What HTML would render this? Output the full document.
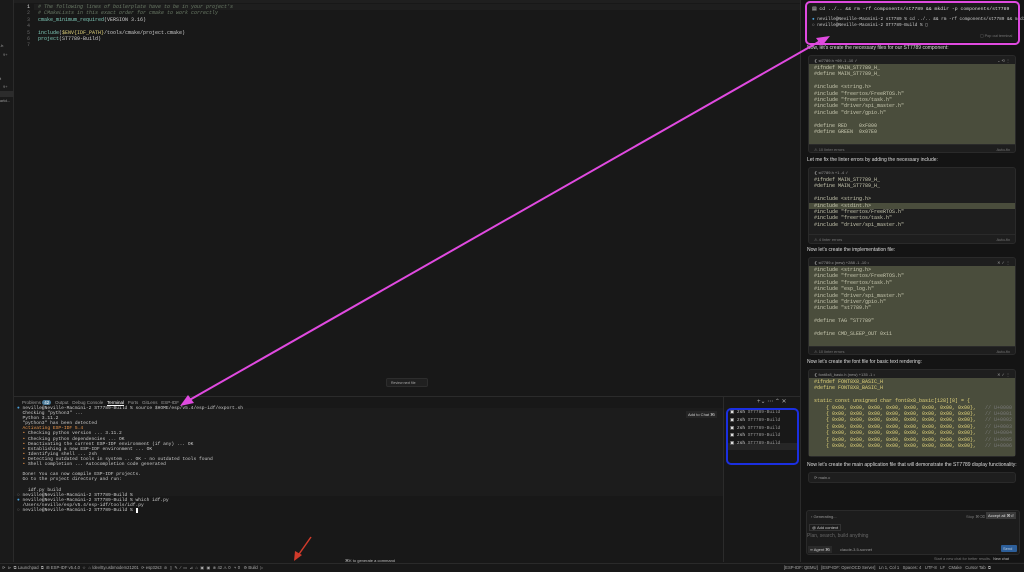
<!DOCTYPE html>
<html><head><meta charset="utf-8"><style>
*{margin:0;padding:0;box-sizing:border-box}
body{width:1024px;height:572px;background:#181818;position:relative;overflow:hidden;font-family:"Liberation Sans",sans-serif;color:#ccc}
.a{position:absolute;white-space:pre}
.m{font-family:"Liberation Mono",monospace}
.code{font-family:"Liberation Mono",monospace;font-size:5px;line-height:6.4px;white-space:pre}
.cm{color:#6a7a66;font-style:italic}
.fn{color:#7ec9b8}
.kw{color:#c586c0}
.st{color:#d9b47a}
.ye{color:#e0d27a}
.blk{position:absolute;left:808px;width:208px;background:#1e1e1e;border:1px solid #2a2a2a;border-radius:3px}
.bh{height:8px;font-size:4px;color:#999;padding:2px 5px}
.bc{background:#4a4d3c;padding:1px 5px;color:#c8c8b0}
.bf{height:8px;font-size:4px;color:#777;padding:2px 5px;border-top:1px solid #2a2a2a}
.t{font-size:5px;color:#ddd;left:807px}
</style></head><body>
<div class="a" style="left:0;top:0;width:14px;height:562px;background:#1a1a1a;border-right:1px solid #2a2a2a"></div>
<div class="a" style="left:0;top:43px;font-size:4px;color:#aaa">.h</div>
<div class="a" style="left:3px;top:52px;font-size:4px;color:#888">9+</div>
<div class="a" style="left:0;top:76px;font-size:4px;color:#aaa">t</div>
<div class="a" style="left:3px;top:84px;font-size:4px;color:#888">9+</div>
<div class="a" style="left:0;top:91px;width:14px;height:6px;background:#2c2c2c"></div>
<div class="a" style="left:0;top:98px;font-size:4px;color:#aaa">orld...</div>
<div class="a" style="left:0;top:562px;font-size:4px;color:#777">ENTS</div>
<div class="a" style="left:14px;top:0;width:786px;height:3px;background:#1f1f1f"></div>
<div class="a" style="left:34px;top:4px;width:766px;height:6px;background:#1e1e1e"></div>
<div class="a code" style="left:20px;top:4px;color:#666;text-align:right;width:10px"><span style="color:#ddd">1</span>
2
3
4
5
6
7</div>
<div class="a code" style="left:38px;top:4px;color:#ccc"><span class="cm"># The following lines of boilerplate have to be in your project's</span>
<span class="cm"># CMakeLists in this exact order for cmake to work correctly</span>
<span class="fn">cmake_minimum_required</span>(VERSION 3.16)

<span class="fn">include</span>(<span class="ye">$ENV{IDF_PATH}</span>/tools/cmake/project.cmake)
<span class="fn">project</span>(ST7789-Build)</div>
<div class="a" style="left:386px;top:378px;width:42px;height:9px;background:#202020;border:1px solid #2d2d2d;border-radius:2px;font-size:3.5px;color:#aaa;padding:2px 4px">Review next file</div>
<div class="a" style="left:14px;top:396px;width:786px;height:1px;background:#2b2b2b"></div>
<div class="a" style="left:22px;top:400px;font-size:4.5px;color:#999">Problems <span style="background:#4a7a99;color:#fff;border-radius:3px;padding:0 2px">42</span>   Output   Debug Console   <span style="color:#fff;border-bottom:1px solid #fff">Terminal</span>   Ports   GitLens   ESP-IDF</div>
<div class="a" style="left:14px;top:408px;width:709px;height:88px;background:#1c1c1c"></div>
<div class="a" style="left:723px;top:396px;width:1px;height:166px;background:#2b2b2b"></div>
<div class="a" style="left:686px;top:411px;font-size:4px;color:#ccc;background:#252525;padding:1px 2px">Add to Chat ⌘I</div>
<div class="a" style="left:757px;top:398px;font-size:6px;color:#aaa">+⌄ ⋯ ⌃ ✕</div>
<div class="a code" style="left:17px;top:406px;font-size:4.6px;line-height:5.1px;color:#ccc"><span style="color:#4a9fd8">●</span> neville@Neville-Macmini-2 ST7789-Build % source $HOME/esp/v5.4/esp-idf/export.sh
  Checking "python3" ...
  Python 3.11.2
  "python3" has been detected
  <span style="color:#e8944a">Activating ESP-IDF 5.4</span>
  <span style="color:#e8944a">•</span> Checking python version ... 3.11.2
  <span style="color:#e8944a">•</span> Checking python dependencies ... OK
  <span style="color:#e8944a">•</span> Deactivating the current ESP-IDF environment (if any) ... OK
  <span style="color:#e8944a">•</span> Establishing a new ESP-IDF environment ... OK
  <span style="color:#e8944a">•</span> Identifying shell ... zsh
  <span style="color:#e8944a">•</span> Detecting outdated tools in system ... OK - no outdated tools found
  <span style="color:#e8944a">•</span> Shell completion ... Autocompletion code generated

  Done! You can now compile ESP-IDF projects.
  Go to the project directory and run:

    idf.py build
<span style="color:#888">○</span> neville@Neville-Macmini-2 ST7789-Build %
<span style="color:#4a9fd8">●</span> neville@Neville-Macmini-2 ST7789-Build % which idf.py
  /Users/neville/esp/v5.4/esp-idf/tools/idf.py
<span style="color:#888">○</span> neville@Neville-Macmini-2 ST7789-Build % <span style="background:#fff">&nbsp;</span></div>
<div class="a" style="left:728px;top:443px;width:70px;height:7px;background:#262626"></div>
<div class="a code" style="left:730px;top:409px;font-size:4.5px;line-height:7.8px;color:#999"><span style="color:#ddd">▣ zsh</span> ST7789-Build
<span style="color:#ddd">▣ zsh</span> ST7789-Build
<span style="color:#ddd">▣ zsh</span> ST7789-Build
<span style="color:#ddd">▣ zsh</span> ST7789-Build
<span style="color:#ddd">▣ zsh</span> ST7789-Build</div>
<div class="a" style="left:726px;top:408px;width:73px;height:57px;border:2px solid #1b2fe0;border-radius:5px"></div>
<div class="a" style="left:345px;top:558px;font-size:4px;color:#bbb">⌘K to generate a command</div>
<div class="a" style="left:800px;top:0;width:224px;height:562px;background:#141414;border-left:1px solid #2b2b2b"></div>
<div class="a" style="left:807px;top:2px;width:210px;height:40px;background:#1a1a1a"></div>
<div class="a m" style="left:812px;top:7px;font-size:4.8px;color:#ddd">▤ cd ../.. &amp;&amp; rm -rf components/st7789 &amp;&amp; mkdir -p components/st7789</div>
<div class="a m" style="left:812px;top:17px;font-size:4.4px;line-height:5.5px;color:#ccc"><span style="color:#4a9fd8">●</span> neville@Neville-Macmini-2 st7789 % cd ../.. &amp;&amp; rm -rf components/st7789 &amp;&amp; mkdir -
○ neville@Neville-Macmini-2 ST7789-Build % ▯</div>
<div class="a" style="left:980px;top:33px;font-size:3.8px;color:#777">▢ Pop out terminal</div>
<div class="a" style="left:805px;top:1px;width:215px;height:44px;border:2px solid #e04ae0;border-radius:5px"></div>

<div class="a t" style="top:45px">Now, let's create the necessary files for our ST7789 component:</div>
<div class="blk" style="top:55px;height:98px"><div class="bh">❮ st7789.h +69 -1 -10 ✓<span style="float:right">⌄ ⟲ ⋮</span></div>
<div class="bc code" style="height:80px">#ifndef MAIN_ST7789_H_
#define MAIN_ST7789_H_

#include &lt;string.h&gt;
#include "freertos/FreeRTOS.h"
#include "freertos/task.h"
#include "driver/spi_master.h"
#include "driver/gpio.h"

#define RED    0xF800
#define GREEN  0x07E0</div><div class="bf">⚠ 10 linter errors<span style="float:right">Auto-fix</span></div></div>

<div class="a t" style="top:157px">Let me fix the linter errors by adding the necessary include:</div>
<div class="blk" style="top:167px;height:77px"><div class="bh">❮ st7789.h +1 -4 ✓</div>
<div class="bc code" style="height:58px;background:#1e1e1e;position:relative"><div style="position:absolute;left:0;right:0;top:26.6px;height:6.4px;background:#4a4d3c"></div><span style="position:relative">#ifndef MAIN_ST7789_H_
#define MAIN_ST7789_H_

#include &lt;string.h&gt;
#include &lt;stdint.h&gt;
#include "freertos/FreeRTOS.h"
#include "freertos/task.h"
#include "driver/spi_master.h"</span></div><div class="bf">⚠ 4 linter errors<span style="float:right">Auto-fix</span></div></div>

<div class="a t" style="top:247px">Now let's create the implementation file:</div>
<div class="blk" style="top:257px;height:98px"><div class="bh">❮ st7789.c (new) +288 -1 -10 •<span style="float:right">✕ ✓ ⋮</span></div>
<div class="bc code" style="height:80px">#include &lt;string.h&gt;
#include "freertos/FreeRTOS.h"
#include "freertos/task.h"
#include "esp_log.h"
#include "driver/spi_master.h"
#include "driver/gpio.h"
#include "st7789.h"

#define TAG "ST7789"

#define CMD_SLEEP_OUT 0x11</div><div class="bf">⚠ 10 linter errors<span style="float:right">Auto-fix</span></div></div>

<div class="a t" style="top:359px">Now let's create the font file for basic text rendering:</div>
<div class="blk" style="top:369px;height:88px"><div class="bh">❮ font8x8_basic.h (new) +135 -1 •<span style="float:right">✕ ✓ ⋮</span></div>
<div class="bc code" style="height:78px;color:#e0d27a">#ifndef FONT8X8_BASIC_H
#define FONT8X8_BASIC_H

static const unsigned char font8x8_basic[128][8] = {
    { 0x00, 0x00, 0x00, 0x00, 0x00, 0x00, 0x00, 0x00},   <span style="color:#777">// U+0000</span>
    { 0x00, 0x00, 0x00, 0x00, 0x00, 0x00, 0x00, 0x00},   <span style="color:#777">// U+0001</span>
    { 0x00, 0x00, 0x00, 0x00, 0x00, 0x00, 0x00, 0x00},   <span style="color:#777">// U+0002</span>
    { 0x00, 0x00, 0x00, 0x00, 0x00, 0x00, 0x00, 0x00},   <span style="color:#777">// U+0003</span>
    { 0x00, 0x00, 0x00, 0x00, 0x00, 0x00, 0x00, 0x00},   <span style="color:#777">// U+0004</span>
    { 0x00, 0x00, 0x00, 0x00, 0x00, 0x00, 0x00, 0x00},   <span style="color:#777">// U+0005</span>
    { 0x00, 0x00, 0x00, 0x00, 0x00, 0x00, 0x00, 0x00},   <span style="color:#777">// U+0006</span></div></div>

<div class="a t" style="top:462px">Now let's create the main application file that will demonstrate the ST7789 display functionality:</div>
<div class="blk" style="top:472px;height:11px"><div class="bh">⟳ main.c</div></div>

<div class="a" style="left:806px;top:510px;width:214px;height:45px;background:#1c1c1c;border:1px solid #2a2a2a;border-radius:3px"></div>
<div class="a" style="left:811px;top:514px;font-size:4px;color:#999">› Generating...</div>
<div class="a" style="left:966px;top:514px;font-size:4px;color:#777">Stop ⌘⌫</div>
<div class="a" style="left:986px;top:512px;font-size:4px;color:#ddd;background:#3a3a3a;padding:1px 2px">Accept all ⌘⏎</div>
<div class="a" style="left:809px;top:524px;font-size:4px;color:#ccc;border:1px solid #333;padding:0 2px">@ Add context</div>
<div class="a" style="left:807px;top:533px;font-size:5px;color:#666">Plan, search, build anything</div>
<div class="a" style="left:808px;top:546px;font-size:4px;color:#ccc;background:#2a2a2a;padding:1px 2px">∞ Agent ⌘I</div>
<div class="a" style="left:840px;top:547px;font-size:4px;color:#999">claude-3.5-sonnet</div>
<div class="a" style="left:1001px;top:545px;width:16px;height:7px;background:#2d5f9a;border-radius:1px;font-size:4px;color:#bcd;padding:1px 2px">Send</div>
<div class="a" style="left:934px;top:557px;font-size:3.8px;color:#777">Start a new chat for better results.  <span style="color:#bbb">New chat</span></div>
<div class="a" style="left:0;top:563px;width:1024px;height:9px;background:#181818;border-top:1px solid #2a2a2a"></div>
<div class="a" style="left:2px;top:565px;font-size:4.2px;color:#aaa">⟳  ⊳  ⧉ Launchpad  ⧉  ⊞ ESP-IDF v5.4.0  ☆  ⌂ /dev/tty.usbmodem21201  ⟳ esp32s3  ⊘  ▯  ✎  ⁄  ▭  ⊿  ⌂  ▣  ▣  ⊗ 42 ⚠ 0   ⑂ 0   ⚙ Build  ▷</div>
<div class="a" style="left:784px;top:565px;font-size:4.2px;color:#aaa">[ESP-IDF: QEMU]   [ESP-IDF: OpenOCD Server]   Ln 1, Col 1   Spaces: 4   UTF-8   LF   CMake   Cursor Tab  ⧉</div>
<svg class="a" style="left:0;top:0" width="1024" height="572">
<line x1="822" y1="40" x2="186" y2="402" stroke="#e04ae0" stroke-width="2"/>
<polygon points="830,36 816,38 822,46" fill="#e04ae0"/>
<polygon points="180,406 194,403 188,395" fill="#e04ae0"/>
<line x1="311" y1="537" x2="297" y2="557" stroke="#d03a2a" stroke-width="1.5"/>
<polygon points="294,561 295,551 302,555" fill="#d03a2a"/>
</svg>
</body></html>
